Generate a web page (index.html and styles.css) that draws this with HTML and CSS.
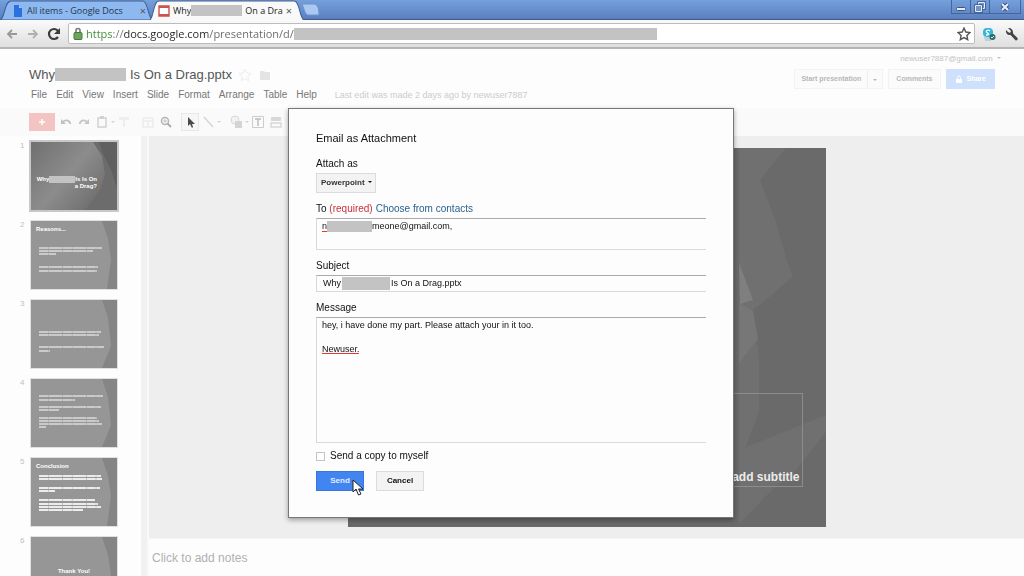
FILE: index.html
```html
<!DOCTYPE html>
<html lang="en">
<head>
  <meta charset="UTF-8">
  <meta name="viewport" content="width=device-width, initial-scale=1.0">
  <title>Email as Attachment - Google Docs</title>
  <link rel="stylesheet" href="styles.css">
</head>
<body>
  <div class="tabstrip">
    <div class="tab">
      <svg class="tab-shape" viewBox="0 0 152 19" preserveAspectRatio="none"><path d="M0 19 C5 18 4 1 11 1 H142 C147 1 147 18 152 19Z" fill="#8db9f0" stroke="#3f5f92"/></svg>
      <svg class="tab-icon" viewBox="0 0 12 12"><path d="M2 0h5l3 3v9H2z" fill="#2c6fe0"/><path d="M7 0v3h3z" fill="#a9c9fa"/></svg>
      <span class="tab-title">All items - Google Docs</span>
      <button class="tab-close" aria-label="Close tab">×</button>
    </div>
    <div class="tab active">
      <svg class="tab-shape" viewBox="0 0 158 19" preserveAspectRatio="none"><path d="M0 20 C5 18 4 1 10 1 H147 C153 1 152 18 158 20Z" fill="#f9f9f9" stroke="#3f5f92"/></svg>
      <svg class="tab-icon" viewBox="0 0 12 12"><path d="M1 1h10v10H1z" fill="#fff" stroke="#c9534d" stroke-width="1.4"/><path d="M1 1h10v2H1zM1 9h10v2H1z" fill="#c9534d"/></svg>
      <span class="tab-title">Why<span class="redact tab-redact"></span>On a Dra</span>
      <button class="tab-close" aria-label="Close tab">×</button>
    </div>
    <button class="new-tab" aria-label="New tab"><svg viewBox="0 0 20 13"><path d="M1 1h12c4 0 5 6 5 11H7C4 12 3 5 1 1z" fill="#a9c9f3" stroke="#6e94cc"/></svg></button>
    <div class="window-buttons">
      <button aria-label="Minimize"><svg viewBox="0 0 12 12"><rect x="1.500" y="6.500" width="9" height="3" rx="1" fill="#e6edf8" stroke="#3d5580"/></svg></button>
      <button aria-label="Restore"><svg viewBox="0 0 12 12" fill="#6f93cc"><path d="M4.500 1.500h6v6h-6z" stroke="#3d5580" stroke-width="2.500"/><path d="M4.500 1.500h6v6h-6z" stroke="#e6edf8"/><path d="M1.500 4.500h6v6h-6z" stroke="#3d5580" stroke-width="2.500"/><path d="M1.500 4.500h6v6h-6z" stroke="#e6edf8"/></svg></button>
      <button class="wide" aria-label="Close"><svg viewBox="0 0 12 12"><path d="M3 3l6 6M9 3l-6 6" stroke="#3d5580" stroke-width="4"/><path d="M3 3l6 6M9 3l-6 6" stroke="#e6edf8" stroke-width="2"/></svg></button>
    </div>
  </div>

  <div class="navbar">
    <button aria-label="Back"><svg viewBox="0 0 14 14"><path d="M12 7H3M7 3L3 7l4 4" fill="none" stroke="#999" stroke-width="1.800"/></svg></button>
    <button aria-label="Forward"><svg viewBox="0 0 14 14"><path d="M2 7h9M7 3l4 4-4 4" fill="none" stroke="#b0b0b0" stroke-width="1.800"/></svg></button>
    <button aria-label="Reload"><svg viewBox="0 0 14 14"><path d="M11 10a5 5 0 1 1 0-6" fill="none" stroke="#3c3c3c" stroke-width="2.200"/><path d="M13 1v6H7z" fill="#3c3c3c"/></svg></button>
    <div class="omnibox">
      <svg class="lock" viewBox="0 0 10 13"><path d="M3 6V3.500a2 2 0 0 1 4 0V6" fill="none" stroke="#777" stroke-width="1.600"/><rect x="1" y="5.500" width="8" height="7" rx="1" fill="#6ca65c" stroke="#47793d"/></svg>
      <div class="url-wrap">
        <input class="url" type="text" aria-label="Address" value="https://docs.google.com/presentation/d/">
        <span class="redact url-redact"></span>
      </div>
      <svg class="star" viewBox="0 0 14 14"><path d="M7 1l1.800 4 4.200.5-3.100 2.900.8 4.300L7 10.600l-3.700 2.100.8-4.300L1 5.500 5.200 5z" fill="#fff" stroke="#555" stroke-width="1.400"/></svg>
    </div>
    <button aria-label="Skype extension"><svg viewBox="0 0 14 14"><rect x="1" y="1" width="10" height="9" rx="4" fill="#35b4dc"/><path d="M8 4C6 2 3 4 5 5.500S8 8 4 8" fill="none" stroke="#fff" stroke-width="1.300"/><path d="M2 11h7M3 13h6" stroke="#8ebccc"/><circle cx="10.500" cy="10" r="3" fill="#2d6d68"/><path d="M9 10l1 1 2-2" fill="none" stroke="#d6f0ea"/></svg></button>
    <button aria-label="Settings"><svg viewBox="0 0 14 14"><path d="M3 1L6 4 5 6 3 5 1 3c-.5 3 1 5.500 4.500 5l5 5.200c1 .8 3-1 2-2.200L8 6.500C8.500 3 6 .5 3 1z" fill="#444"/></svg></button>
  </div>

  <div class="app">
    <header class="doc-header">
      <div class="doc-left">
        <div class="doc-title">
          <span>Why</span><span class="redact title-redact"></span><span>Is On a Drag.pptx</span>
          <svg class="faint" viewBox="0 0 14 14"><path d="M7 1l1.800 4 4.200.5-3.100 2.900.8 4.300L7 10.600l-3.700 2.100.8-4.300L1 5.500 5.200 5z" fill="none" stroke="#ededed"/></svg>
          <svg class="faint" viewBox="0 0 14 14"><path d="M2 3h4l1 1h5v8H2z" fill="#e4e4e4"/></svg>
        </div>
        <nav class="menu">
          <button>File</button><button>Edit</button><button>View</button><button>Insert</button><button>Slide</button><button>Format</button><button>Arrange</button><button>Table</button><button>Help</button>
          <span class="last-edit">Last edit was made 2 days ago by newuser7887</span>
        </nav>
      </div>
      <div class="doc-right">
        <button class="account">newuser7887@gmail.com <i class="caret"></i></button>
        <div class="doc-actions">
          <div class="split">
            <button>Start presentation</button><button class="drop" aria-label="Presentation options"><i class="caret"></i></button>
          </div>
          <button class="plain">Comments</button>
          <button class="share"><svg viewBox="0 0 8 9"><path d="M2.500 4V2.500a1.500 1.500 0 0 1 3 0V4" fill="none" stroke="#fff"/><path d="M1 4h6v4H1z" fill="#fff"/></svg>Share</button>
        </div>
      </div>
    </header>

    <div class="toolbar">
      <button class="add" aria-label="New slide"><svg viewBox="0 0 14 14"><path d="M7 4v6M4 7h6" stroke="#fff" stroke-width="1.600"/></svg></button>
      <button aria-label="Undo"><svg viewBox="0 0 14 14"><path d="M4 7C6 4.500 10 4.500 11.500 9" fill="none" stroke="#c0c0c0" stroke-width="1.800"/><path d="M2 4v5h5z" fill="#c0c0c0"/></svg></button>
      <button aria-label="Redo"><svg viewBox="0 0 14 14"><path d="M10 7C8 4.500 4 4.500 2.500 9" fill="none" stroke="#c6c6c6" stroke-width="1.800"/><path d="M12 4v5H7z" fill="#c6c6c6"/></svg></button>
      <button aria-label="Paste"><svg viewBox="0 0 14 14"><path d="M3 3h8v9H3z" fill="none" stroke="#d2d2d2" stroke-width="1.500"/><path d="M5 1h4v3H5z" fill="#d2d2d2"/></svg></button>
      <i class="caret"></i>
      <button aria-label="Paint format"><svg viewBox="0 0 14 14"><path d="M2 2h10v3H2zM6 5h2v7H6z" fill="#eee"/></svg></button>
      <i class="gap"></i>
      <button aria-label="Layout"><svg viewBox="0 0 14 14"><path d="M2 3h10v9H2zM2 6h10M7 6v6" fill="none" stroke="#ededed" stroke-width="1.500"/></svg></button>
      <button aria-label="Zoom"><svg viewBox="0 0 14 14"><circle cx="6" cy="6" r="3.500" fill="none" stroke="#b4b4b4" stroke-width="1.500"/><path d="M4 6h4M6 4v4" stroke="#c4c4c4"/><path d="M8.500 8.500L12 12" stroke="#acacac" stroke-width="1.800"/></svg></button>
      <i class="gap"></i>
      <button class="selected" aria-label="Select"><svg viewBox="0 0 14 14"><path d="M5 2v9l2-2 2 4 1-1-1-3h3z" fill="#4a4a4a"/></svg></button>
      <button aria-label="Line"><svg viewBox="0 0 14 14"><path d="M3 2l9 10" stroke="#d4d4d4" stroke-width="1.400"/></svg></button>
      <i class="caret"></i>
      <i class="gap"></i>
      <button aria-label="Shape"><svg viewBox="0 0 14 14"><circle cx="6" cy="5" r="4" fill="#f2f2f2" stroke="#d8d8d8"/><path d="M6 6h7v7H6z" fill="#d4d4d4"/></svg></button>
      <i class="caret"></i>
      <button aria-label="Text box"><svg viewBox="0 0 14 14"><path d="M1.500 1.500h11v11h-11z" fill="none" stroke="#ccc"/><path d="M4 4h6M7 4v7" stroke="#bbb" stroke-width="1.400"/></svg></button>
      <button aria-label="Image"><svg viewBox="0 0 14 14"><path d="M2 2h10v4H2z" fill="#d8d8d8"/><path d="M2 8h10v4H2z" fill="none" stroke="#d8d8d8" stroke-width="1.500"/></svg></button>
    </div>

    <div class="workspace">
      <ol class="slides">
        <li class="current"><div class="thumb"><svg class="shade" viewBox="0 0 86 68" preserveAspectRatio="none"><path d="M62 0h24v68H54l8-10 8-12 4-14-3-18z" fill="#6c6c6c"/><path d="M68 0h18v46l-6-18-8-16z" fill="#606060"/></svg><p class="cover">Why<span class="redact cover-redact"></span>Is Is On<br>a Drag?</p></div></li>
        <li><div class="thumb"><svg class="shade" viewBox="0 0 86 68" preserveAspectRatio="none"><path d="M71 0h15v68H76l4-30-3-20z" fill="#858585"/><g class="lines"><path d="M8 27h63M8 30h54M8 33h17M8 46h59M8 50h58"/></g></svg><h3>Reasons...</h3></div></li>
        <li><div class="thumb"><svg class="shade" viewBox="0 0 86 68" preserveAspectRatio="none"><path d="M71 0h15v68H71l9-22-3-28z" fill="#858585"/><g class="lines"><path d="M8 32h62M8 35h60M8 47h65M8 51h11"/></g></svg></div></li>
        <li><div class="thumb"><svg class="shade" viewBox="0 0 86 68" preserveAspectRatio="none"><path d="M71 0h15v68H71l9-22-3-28z" fill="#858585"/><g class="lines"><path d="M8 17h64M8 21h36M8 28h62M8 31h20M8 39h58M8 42h60M8 45h63M8 48h7"/></g></svg></div></li>
        <li><div class="thumb"><svg class="shade" viewBox="0 0 86 68" preserveAspectRatio="none"><path d="M71 0h15v68H76l4-30-3-20z" fill="#858585"/><g class="lines bold"><path d="M8 18h62M8 21h63M8 30h61M8 33h16M8 42h56M8 46h59M8 49h62M8 52h44"/></g></svg><h3>Conclusion</h3></div></li>
        <li><div class="thumb"><svg class="shade" viewBox="0 0 86 68" preserveAspectRatio="none"><path d="M71 0h15v68H76l4-30-3-20z" fill="#858585"/></svg><p class="thanks">Thank You!</p></div></li>
      </ol>
      <div class="splitter"></div>
      <main class="editor">
        <div class="canvas">
          <div class="slide">
            <svg class="shade" viewBox="0 0 478 379" preserveAspectRatio="none"><path d="M391 0h47l-26 32 15 39 12 42 6 15-22 20-18 14 6 48v54l-14 36-6 15z" fill="#707070"/><path d="M391 115l14 37-13 4z" fill="#7f7f7f"/><path d="M391 155l14 8 5 28-19 24z" fill="#777"/><path d="M391 302l87-35v17l-30 38-26 22-31 32z" fill="#707070"/></svg>
            <div class="subtitle">Click to add subtitle</div>
          </div>
        </div>
        <div class="notes">Click to add notes</div>
      </main>
    </div>
  </div>

  <div class="overlay">
    <form class="dialog" role="dialog" aria-labelledby="dialog-title">
      <h2 id="dialog-title">Email as Attachment</h2>
      <div class="field">
        <label for="format">Attach as</label>
        <div class="select-wrap">
          <select id="format"><option>Powerpoint</option><option>PDF</option></select>
          <i class="caret"></i>
        </div>
      </div>
      <div class="field">
        <div class="label-row"><label for="to">To <span class="required">(required)</span></label><a href="#">Choose from contacts</a></div>
        <div class="input-wrap">
          <textarea id="to" class="to" spellcheck="false">n                  meone@gmail.com,</textarea>
          <span class="spelling to-spelling"></span>
          <span class="redact to-redact"></span>
        </div>
      </div>
      <div class="field">
        <label for="subject">Subject</label>
        <div class="input-wrap">
          <input id="subject" type="text" spellcheck="false" value="Why                    Is On a Drag.pptx">
          <span class="redact subject-redact"></span>
        </div>
      </div>
      <div class="field">
        <label for="message">Message</label>
        <div class="input-wrap">
          <textarea id="message" class="message" spellcheck="false">hey, i have done my part. Please attach your in it too.

Newuser.</textarea>
          <span class="spelling message-spelling"></span>
        </div>
      </div>
      <div class="check">
        <input type="checkbox" id="copy"><label for="copy">Send a copy to myself</label>
      </div>
      <div class="buttons">
        <div class="send-wrap">
          <button type="button" class="send">Send</button>
          <svg class="pointer" viewBox="0 0 12 17"><path d="M1 1v12l3-3 2.500 6 2.500-1-2.500-5H11z" fill="#fff" stroke="#222"/></svg>
        </div>
        <button type="button" class="cancel">Cancel</button>
      </div>
    </form>
  </div>
</body>
</html>
```
FILE: styles.css
```css
* { box-sizing: border-box; }
body {
  margin: 0;
  height: 100vh;
  display: flex;
  flex-direction: column;
  overflow: hidden;
  background: #fdfdfd;
  color: #333;
  font: 10px/12px "Liberation Sans", Arial, sans-serif;
}
button {
  font: inherit;
  color: inherit;
  background: none;
  border: 0;
  padding: 0;
  white-space: nowrap;
}
svg { display: block; flex: none; }
h2, h3, p, ol { margin: 0; padding: 0; }
.redact { display: inline-block; flex: none; background: #c3c3c3; }
.caret {
  display: inline-block;
  flex: none;
  border: 2px solid transparent;
  border-top-color: currentColor;
  border-bottom: 0;
}

/* browser tabs */
.tabstrip {
  display: flex;
  flex: none;
  height: 20px;
  background: linear-gradient(#74a0dc, #5a7fc0);
  border-bottom: 1px solid #3f5a85;
  font: 9px/12px "Open Sans", "Noto Sans", sans-serif;
}
.tab {
  position: relative;
  display: flex;
  align-items: center;
  width: 153px;
  height: 20px;
  padding: 1px 5px 0 12px;
  color: #24364f;
}
.tab.active { width: 156px; margin-left: -4px; padding: 1px 11px 0 9px; z-index: 1; color: #222; }
.tab-shape { position: absolute; left: 0; top: 0; width: 100%; height: 100%; }
.tab-icon { position: relative; width: 12px; height: 12px; margin-right: 3px; }
.tab-title { position: relative; flex: 1; overflow: hidden; white-space: nowrap; display: flex; align-items: center; }
.tab-close { position: relative; font-size: 11px; color: #555; width: 10px; }
.tab-redact { width: 51px; height: 11px; margin-right: 3px; }
.new-tab svg { width: 20px; height: 13px; margin-left: -4px; }
.window-buttons { display: flex; margin: 0 3px 0 auto; height: 14px; border: 1px solid #46659b; border-top: 0; }
.window-buttons button { width: 19px; padding-left: 3px; border-right: 1px solid #46659b; }
.window-buttons .wide { width: 30px; padding-left: 9px; border: 0; }
.window-buttons svg { width: 12px; height: 12px; }

.navbar {
  display: flex;
  align-items: center;
  flex: none;
  height: 29px;
  padding: 0 5px;
  gap: 7px;
  background: linear-gradient(#fafafa, #dfdfdf);
  border-bottom: 2px solid #b4b4b4;
}
.navbar svg { width: 14px; height: 14px; }
.omnibox {
  display: flex;
  align-items: center;
  flex: 1;
  height: 21px;
  padding: 0 3px 0 4px;
  background: #fff;
  border: 1px solid #bcbcbc;
  border-radius: 2px;
}
.omnibox .lock { width: 10px; height: 13px; margin-right: 3px; }
.url-wrap { position: relative; flex: 1; }
.url {
  display: block;
  width: 100%;
  border: 0;
  padding: 0;
  outline: 0;
  font: 11px/17px "Open Sans", "Noto Sans", sans-serif;
  color: transparent;
  background: linear-gradient(90deg, #3a8a35 27px, #777 27px, #777 37px, #222 37px, #222 122px, #666 122px);
  background-clip: text;
  -webkit-background-clip: text;
}
.url-redact { position: absolute; left: 208px; top: 3px; width: 363px; height: 12px; }
.navbar > button:last-child { margin-left: 2px; }

/* document header */
.app { flex: 1; min-height: 0; display: flex; flex-direction: column; }
.doc-header { display: flex; justify-content: space-between; flex: none; height: 59px; padding: 0 29px; }
.doc-title { display: flex; align-items: center; padding-top: 17px; font-size: 13px; line-height: 17px; color: #555; white-space: nowrap; }
.title-redact { width: 71px; height: 13px; margin-right: 4px; }
.faint { width: 14px; height: 14px; margin-left: 6px; }
.menu { display: flex; gap: 9px; padding: 6px 2px 0; color: #777; white-space: nowrap; }
.last-edit { margin-left: 9px; font-size: 9px; color: #ccc; }
.doc-right { display: flex; flex-direction: column; align-items: flex-end; font-size: 8px; }
.account { margin: 4px -6px 4px 0; color: #c4c4c4; }
.account .caret { margin: 0 0 2px 2px; }
.doc-actions { display: flex; gap: 5px; font-weight: bold; color: #b8b8b8; font-size: 7px; }
.doc-actions button { height: 20px; padding: 0 7px; }
.split { display: flex; border: 1px solid #f3f3f3; background: #fbfbfb; }
.doc-actions .split button { height: 18px; padding: 0 6px; }
.doc-actions .split .drop { padding: 0 5px; border-left: 1px solid #eee; }
.plain { background: #fbfbfb; border: 1px solid #f3f3f3; }
.doc-actions .share { display: flex; align-items: center; gap: 4px; padding: 0 9px; background: #cfe0fc; color: #fff; }
.share svg { width: 8px; height: 9px; }

.toolbar {
  display: flex;
  align-items: center;
  flex: none;
  height: 28px;
  padding: 0 29px;
  background: #fafafa;
  color: #d4d4d4;
}
.toolbar svg { width: 14px; height: 14px; }
.toolbar button { width: 18px; height: 18px; padding: 2px; }
.toolbar .add { width: 26px; padding: 2px 6px; margin-right: 2px; background: #f3c4c1; }
.toolbar .selected { border: 1px solid #e8e8e8; padding: 1px; background: #f6f6f6; }
.gap { width: 6px; }

/* slide list and canvas */
.workspace { flex: 1; min-height: 0; display: flex; }
.slides {
  width: 141px;
  flex: none;
  overflow: hidden;
  padding: 6px 24px 0 20px;
  list-style: none;
  font-size: 8px;
  color: #c0c0c0;
}
.slides li { display: flex; justify-content: space-between; margin-bottom: 11px; line-height: 8px; counter-increment: slide; }
.slides li::before { content: counter(slide); }
.thumb { position: relative; width: 86px; height: 68px; overflow: hidden; background: #969696; color: #fff; outline: 1px solid #e0e0e0; }
.current .thumb { background: linear-gradient(130deg, #707070, #8c8c8c 45%, #606060); outline: 2px solid #c8c8c8; }
.shade { position: absolute; left: 0; top: 0; width: 100%; height: 100%; }
.lines { fill: none; stroke: #dcdcdc; stroke-width: 1.5; stroke-dasharray: 9 .4 14 .5; }
.lines.bold { stroke: #ececec; stroke-width: 2; }
.thumb h3 { position: relative; font-size: 6px; line-height: 8px; padding: 4px 5px; }
.thumb p { position: relative; font-size: 6px; line-height: 7px; font-weight: bold; white-space: nowrap; }
.thumb .cover { padding: 34px 20px 0 0; text-align: right; }
.cover-redact { width: 26px; height: 7px; vertical-align: bottom; }
.thumb .thanks { padding-top: 31px; text-align: center; }
.splitter { width: 8px; flex: none; background: #f1f1f1; border-right: 2px solid #f9f9f9; }
.editor { flex: 1; display: flex; flex-direction: column; }
.canvas { flex: 1; display: flex; justify-content: center; padding: 12px 0 11px; background: #eee; }
.slide { position: relative; width: 55%; max-width: 478px; display: flex; align-items: flex-end; justify-content: flex-end; padding: 0 23px 40px; background: #6a6a6a; }
.subtitle {
  position: relative;
  display: flex;
  align-items: flex-end;
  justify-content: flex-end;
  width: 90%;
  height: 94px;
  padding: 2px;
  border: 1px solid #8c8c8c;
  color: #ececec;
  font-size: 12px;
  line-height: 14px;
  font-weight: bold;
}
.notes { height: 38px; flex: none; padding: 11px 3px; border-top: 1px solid #f4f4f4; font-size: 12px; line-height: 16px; color: #b0b0b0; }

/* email dialog */
.overlay {
  position: fixed;
  inset: 49px 2px 0 0;
  display: grid;
  place-items: center;
}
.dialog {
  width: 446px;
  max-width: 100%;
  display: flex;
  flex-direction: column;
  gap: 10px;
  padding: 22px 27px 26px;
  background: #fdfdfd;
  border: 1px solid #777;
  box-shadow: 0 2px 5px rgba(0, 0, 0, .35);
  color: #111;
}
.dialog h2 { font-size: 11px; line-height: 14px; font-weight: normal; margin-bottom: 3px; }
.field { display: flex; flex-direction: column; gap: 3px; }
.label-row { display: flex; gap: 3px; }
.required { color: #c8323c; }
.dialog a { color: #2a628f; text-decoration: none; }
.select-wrap, .input-wrap, .send-wrap { position: relative; }
.select-wrap { align-self: flex-start; }
.select-wrap .caret { position: absolute; right: 4px; top: 8px; }
.dialog select {
  display: block;
  appearance: none;
  width: 60px;
  height: 20px;
  padding: 0 4px;
  border: 1px solid #dcdcdc;
  border-radius: 0;
  background: #f3f3f3;
  color: #333;
  font: bold 8px "Liberation Sans", Arial, sans-serif;
}
textarea, .input-wrap input {
  display: block;
  width: 100%;
  margin: 0;
  border: 1px solid #d9d9d9;
  border-top-color: #aaa;
  border-right: 0;
  border-radius: 0;
  outline: 0;
  resize: none;
  overflow: hidden;
  background: #fdfdfd;
  color: #111;
  font: 9px/12px "Liberation Sans", Arial, sans-serif;
}
textarea { padding: 1px 5px; }
.input-wrap input { height: 17px; padding: 0 6px; }
.to { height: 32px; }
.message { height: 126px; }
.to-redact { position: absolute; left: 11px; top: 3px; width: 45px; height: 11px; }
.subject-redact { position: absolute; left: 26px; top: 2px; width: 48px; height: 13px; }
.spelling { position: absolute; height: 1px; background: #e33; }
.to-spelling { left: 6px; top: 13px; width: 6px; }
.message-spelling { left: 6px; top: 36px; width: 37px; }
.check { display: flex; align-items: center; gap: 5px; margin-top: -3px; }
.check input { appearance: none; width: 9px; height: 9px; margin: 2px 0 0; border: 1px solid #c4c4c4; background: #fff; }
.buttons { display: flex; gap: 12px; margin-top: -1px; }
.buttons button { display: block; width: 48px; height: 20px; font-size: 8px; font-weight: bold; }
.send { background: #4285f0; border: 1px solid #3576e2; color: #e4edff; }
.cancel { background: #f3f3f3; border: 1px solid #dcdcdc; }
.pointer { position: absolute; left: 36px; top: 8px; width: 12px; height: 17px; }
```
